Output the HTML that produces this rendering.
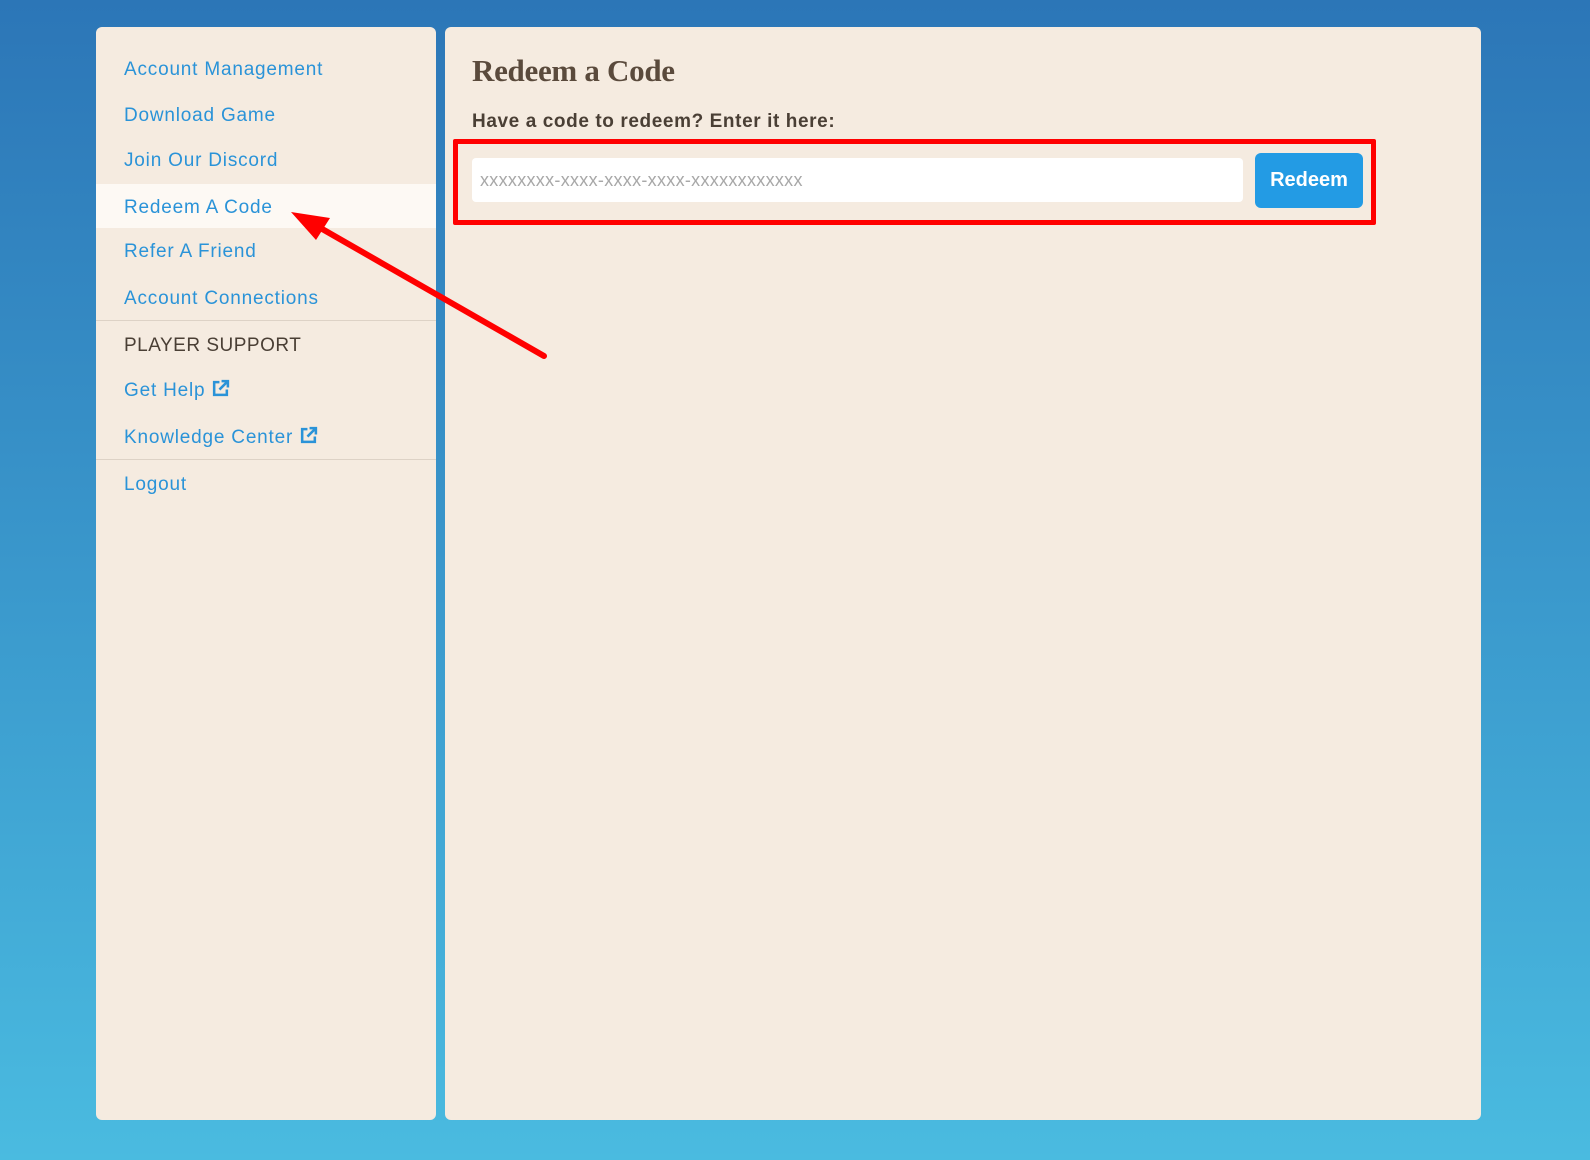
<!DOCTYPE html>
<html><head><meta charset="utf-8"><style>
html,body{margin:0;padding:0}
body{width:1590px;height:1160px;position:relative;overflow:hidden;background:linear-gradient(#2c76b7,#3a98cc 50%,#4abbe0);font-family:"Liberation Sans",sans-serif}
.side{position:absolute;left:96px;top:27px;width:340px;height:1093px;background:#f5ebe0;border-radius:6px}
.main{position:absolute;left:445px;top:27px;width:1036px;height:1093px;background:#f5ebe0;border-radius:6px}
.item{position:absolute;left:28px;font-size:19px;color:#2a93d8;line-height:24px;letter-spacing:0.8px}
.hl{position:absolute;left:0;top:157px;width:340px;height:44px;background:#fdf9f4}
.div{position:absolute;left:0;width:340px;height:1px;background:#ddd2c6}
.hdr{color:#4a3f35;letter-spacing:0.5px}
h1{position:absolute;left:27px;top:26px;margin:0;font-family:"Liberation Serif",serif;font-size:31px;color:#5a4a3c;font-weight:bold;letter-spacing:-0.3px}
.sub{position:absolute;left:27px;top:84px;font-size:19px;color:#4a3f35;font-weight:bold;letter-spacing:0.6px}
.red{position:absolute;left:8px;top:112px;width:913px;height:76px;border:5px solid #f00;border-radius:2px}
.inp{position:absolute;left:27px;top:131px;width:771px;height:44px;background:#fff;border-radius:4px;color:#a8a8a8;font-size:18px;line-height:44px;padding-left:8px;box-sizing:border-box;letter-spacing:0.3px}
.btn{position:absolute;left:810px;top:126px;width:108px;height:55px;background:#239be4;border-radius:6px;color:#fff;font-weight:bold;font-size:20px;line-height:55px;text-align:center}
</style></head><body>
<div class="side">
<div class="hl"></div>
<div class="item" style="top:31px">Account Management</div>
<div class="item" style="top:77px">Download Game</div>
<div class="item" style="top:122px">Join Our Discord</div>
<div class="item" style="top:169px">Redeem A Code</div>
<div class="item" style="top:213px">Refer A Friend</div>
<div class="item" style="top:260px">Account Connections</div>
<div class="div" style="top:293px"></div>
<div class="item hdr" style="top:307px">PLAYER SUPPORT</div>
<div class="item" style="top:352px">Get Help <svg width="19" height="19" viewBox="0 0 18 18" style="vertical-align:-2px"><path d="M8 3H3v12h12v-5" fill="none" stroke="#2a93d8" stroke-width="2.4"/><path d="M10 2h6v6M16 2L8 10" fill="none" stroke="#2a93d8" stroke-width="2.4"/></svg></div>
<div class="item" style="top:399px">Knowledge Center <svg width="19" height="19" viewBox="0 0 18 18" style="vertical-align:-2px"><path d="M8 3H3v12h12v-5" fill="none" stroke="#2a93d8" stroke-width="2.4"/><path d="M10 2h6v6M16 2L8 10" fill="none" stroke="#2a93d8" stroke-width="2.4"/></svg></div>
<div class="div" style="top:432px"></div>
<div class="item" style="top:446px">Logout</div>
</div>
<div class="main">
<h1>Redeem a Code</h1>
<div class="sub">Have a code to redeem? Enter it here:</div>
<div class="red"></div>
<div class="inp">xxxxxxxx-xxxx-xxxx-xxxx-xxxxxxxxxxxx</div>
<div class="btn">Redeem</div>
</div>
<svg style="position:absolute;left:0;top:0" width="1590" height="1160"><line x1="544" y1="356" x2="310" y2="222" stroke="#f00" stroke-width="6" stroke-linecap="round"/><polygon points="291,212 330,218 316,240" fill="#f00"/></svg>
</body></html>
